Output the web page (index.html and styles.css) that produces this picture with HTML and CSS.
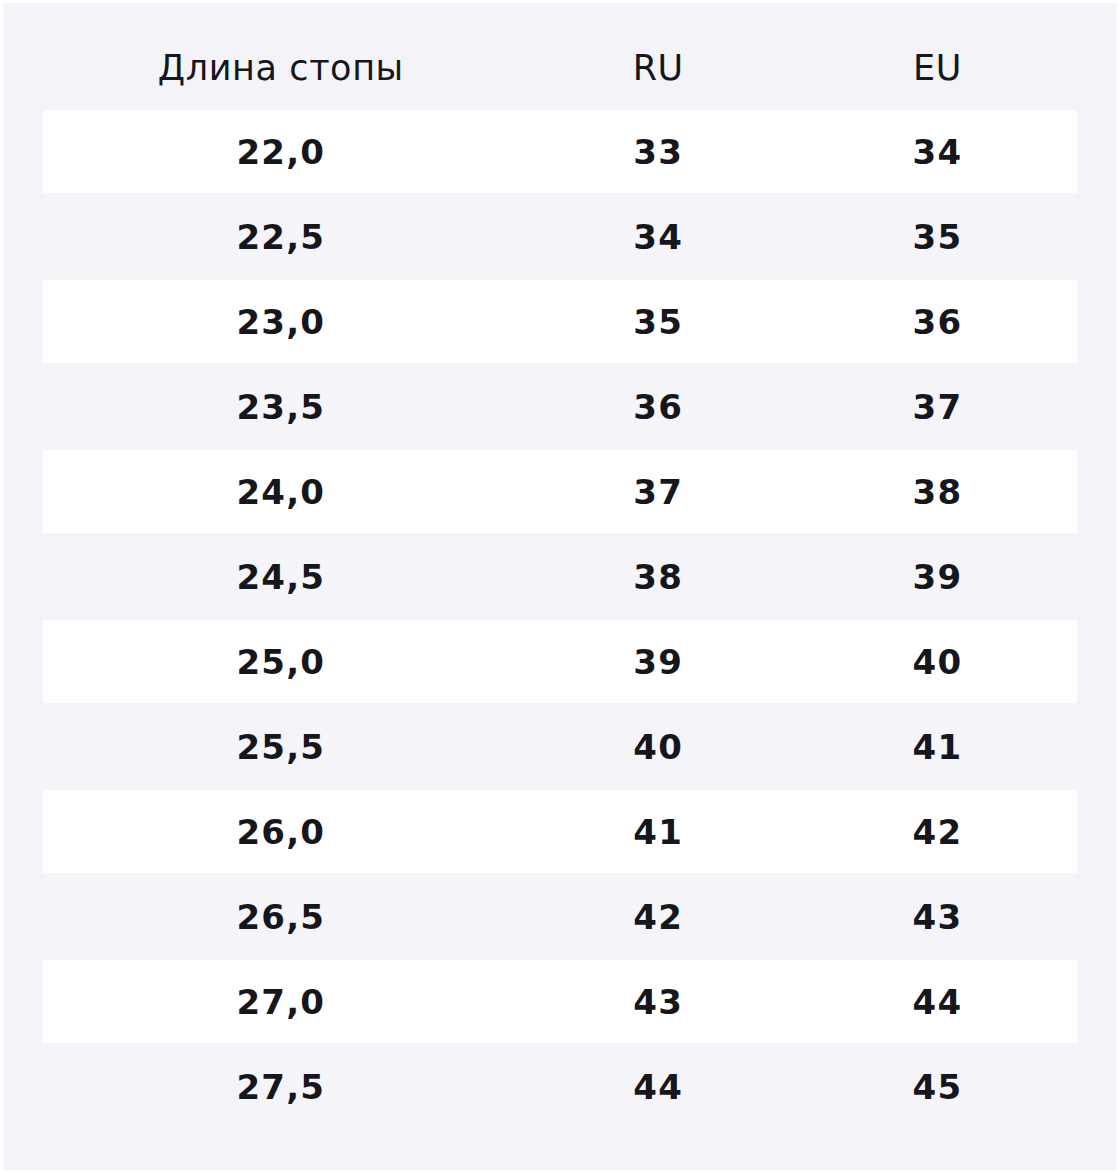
FILE: index.html
```html
<!DOCTYPE html>
<html lang="ru">
<head>
    <meta charset="UTF-8">
    <meta name="viewport" content="width=device-width, initial-scale=1.0">
    <title>Таблица размеров</title>
    <link rel="stylesheet" href="styles.css">
</head>
<body>

<div class="size-chart">
    <table class="size-table">
        <thead>
            <tr>
                <th class="col-length">Длина стопы</th>
                <th>RU</th>
                <th>EU</th>
            </tr>
        </thead>
        <tbody>
            <tr><td>22,0</td><td>33</td><td>34</td></tr>
            <tr><td>22,5</td><td>34</td><td>35</td></tr>
            <tr><td>23,0</td><td>35</td><td>36</td></tr>
            <tr><td>23,5</td><td>36</td><td>37</td></tr>
            <tr><td>24,0</td><td>37</td><td>38</td></tr>
            <tr><td>24,5</td><td>38</td><td>39</td></tr>
            <tr><td>25,0</td><td>39</td><td>40</td></tr>
            <tr><td>25,5</td><td>40</td><td>41</td></tr>
            <tr><td>26,0</td><td>41</td><td>42</td></tr>
            <tr><td>26,5</td><td>42</td><td>43</td></tr>
            <tr><td>27,0</td><td>43</td><td>44</td></tr>
            <tr><td>27,5</td><td>44</td><td>45</td></tr>
        </tbody>
    </table>
</div>

</body>
</html>
```

FILE: styles.css
```css
body {
    margin: 3px;
    background-color: #ffffff;
    font-family: "DejaVu Sans", sans-serif;
    color: #16161d;
}
.size-chart {
    background-color: #f3f3f8;
    padding: 22px 40px 40px;
}
.size-table {
    width: 100%;
    border-collapse: collapse;
    table-layout: fixed;
}
.size-table th, .size-table td {
    padding: 0;
    text-align: center;
}
.size-table th {
    height: 85px;
    font-size: 35px;
    font-weight: normal;
    letter-spacing: 0.6px;
}
.size-table .col-length {
    width: 46%;
}
.size-table td {
    font-size: 34px;
    font-weight: bold;
    letter-spacing: 1.2px;
}
.size-table tbody tr:nth-child(odd) td {
    height: 83px;
    background-color: #ffffff;
}
.size-table tbody tr:nth-child(even) td {
    height: 87px;
    background-color: #f4f4f9;
}
```
